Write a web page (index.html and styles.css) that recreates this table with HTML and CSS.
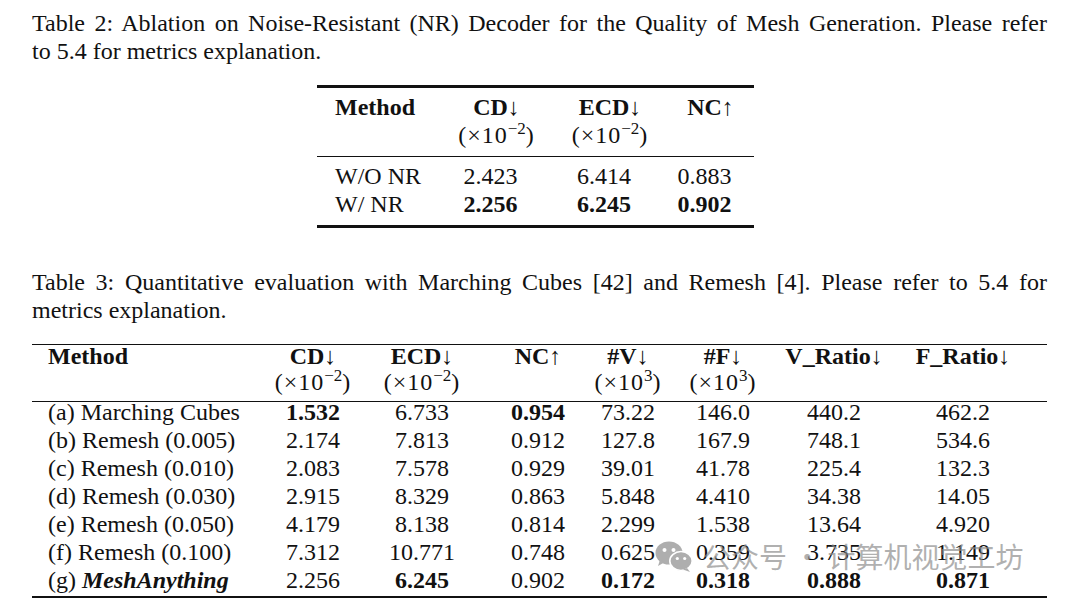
FILE: index.html
```html
<!DOCTYPE html>
<html lang="en">
<head>
<meta charset="utf-8">
<title>Tables 2 and 3</title>
<link rel="stylesheet" href="styles.css">
</head>
<body>
<main class="page">
  <p class="caption">
    <span class="cap-line cap-justify">Table 2: Ablation on Noise-Resistant (NR) Decoder for the Quality of Mesh Generation. Please refer</span>
    <span class="cap-line">to 5.4 for metrics explanation.</span>
  </p>

  <section class="tbl tbl-nr">
    <div class="thead grid-nr">
      <div class="th method">Method</div>
      <div class="th"><div class="main">CD<span class="arr">↓</span></div><div class="sub">(×10<span class="sup">−2</span>)</div></div>
      <div class="th"><div class="main">ECD<span class="arr">↓</span></div><div class="sub">(×10<span class="sup">−2</span>)</div></div>
      <div class="th"><div class="main">NC<span class="arr">↑</span></div></div>
    </div>
    <div class="tbody grid-nr">
      <div class="td method">W/O NR</div><div class="td num">2.423</div><div class="td num">6.414</div><div class="td num">0.883</div>
      <div class="td method">W/ NR</div><div class="td num"><b>2.256</b></div><div class="td num"><b>6.245</b></div><div class="td num"><b>0.902</b></div>
    </div>
  </section>

  <p class="caption c3">
    <span class="cap-line cap-justify">Table 3: Quantitative evaluation with Marching Cubes [42] and Remesh [4]. Please refer to 5.4 for</span>
    <span class="cap-line">metrics explanation.</span>
  </p>

  <section class="tbl tbl-mc">
    <div class="thead grid-mc">
      <div class="th method">Method</div>
      <div class="th"><div class="main">CD<span class="arr">↓</span></div><div class="sub">(×10<span class="sup">−2</span>)</div></div>
      <div class="th"><div class="main">ECD<span class="arr">↓</span></div><div class="sub">(×10<span class="sup">−2</span>)</div></div>
      <div class="th"><div class="main">NC<span class="arr">↑</span></div></div>
      <div class="th"><div class="main">#V<span class="arr">↓</span></div><div class="sub">(×10<span class="sup">3</span>)</div></div>
      <div class="th"><div class="main">#F<span class="arr">↓</span></div><div class="sub">(×10<span class="sup">3</span>)</div></div>
      <div class="th"><div class="main">V_Ratio<span class="arr">↓</span></div></div>
      <div class="th"><div class="main">F_Ratio<span class="arr">↓</span></div></div>
    </div>
    <div class="tbody grid-mc">
      <div class="td method">(a) Marching Cubes</div><div class="td"><b>1.532</b></div><div class="td">6.733</div><div class="td"><b>0.954</b></div><div class="td">73.22</div><div class="td">146.0</div><div class="td">440.2</div><div class="td">462.2</div>
      <div class="td method">(b) Remesh (0.005)</div><div class="td">2.174</div><div class="td">7.813</div><div class="td">0.912</div><div class="td">127.8</div><div class="td">167.9</div><div class="td">748.1</div><div class="td">534.6</div>
      <div class="td method">(c) Remesh (0.010)</div><div class="td">2.083</div><div class="td">7.578</div><div class="td">0.929</div><div class="td">39.01</div><div class="td">41.78</div><div class="td">225.4</div><div class="td">132.3</div>
      <div class="td method">(d) Remesh (0.030)</div><div class="td">2.915</div><div class="td">8.329</div><div class="td">0.863</div><div class="td">5.848</div><div class="td">4.410</div><div class="td">34.38</div><div class="td">14.05</div>
      <div class="td method">(e) Remesh (0.050)</div><div class="td">4.179</div><div class="td">8.138</div><div class="td">0.814</div><div class="td">2.299</div><div class="td">1.538</div><div class="td">13.64</div><div class="td">4.920</div>
      <div class="td method">(f) Remesh (0.100)</div><div class="td">7.312</div><div class="td">10.771</div><div class="td">0.748</div><div class="td">0.625</div><div class="td">0.359</div><div class="td">3.735</div><div class="td">1.149</div>
      <div class="td method">(g) <b><i>MeshAnything</i></b></div><div class="td">2.256</div><div class="td"><b>6.245</b></div><div class="td">0.902</div><div class="td"><b>0.172</b></div><div class="td"><b>0.318</b></div><div class="td"><b>0.888</b></div><div class="td"><b>0.871</b></div>
    </div>
  </section>

  <div class="watermark">
    <svg class="wm-icon" width="38" height="31" viewBox="0 0 38 31" aria-hidden="true">
      <ellipse cx="14" cy="12" rx="13.5" ry="11.5" fill="#9a9a9a"/>
      <path d="M5 19 L3 25 L10 21 Z" fill="#9a9a9a"/>
      <circle cx="9.5" cy="9" r="2" fill="#fff"/>
      <circle cx="18.5" cy="9" r="2" fill="#fff"/>
      <ellipse cx="26" cy="20" rx="11.2" ry="9.5" fill="#9a9a9a" stroke="#fff" stroke-width="1.6"/>
      <path d="M32 27 L35 31 L28 28.5 Z" fill="#9a9a9a"/>
      <circle cx="22.3" cy="17.5" r="1.6" fill="#fff"/>
      <circle cx="29.7" cy="17.5" r="1.6" fill="#fff"/>
    </svg>
    <span class="wm-text">公众号 · 计算机视觉工坊</span>
  </div>
</main>
</body>
</html>
```

FILE: styles.css
```css
html, body {
  margin: 0;
  background: #ffffff;
}

body {
  color: #111111;
  font-family: "Liberation Serif", "Times New Roman", serif;
  font-size: 24px;
}

.page {
  position: relative;
  width: 1015px;
  padding: 9px 24px 0 32px;
}

.caption {
  margin: 0;
  line-height: 28px;
}

.caption.c3 {
  margin-top: 40px;
}

.cap-line {
  display: block;
}

.cap-justify {
  text-align: justify;
  text-align-last: justify;
}

/* shared table pieces */
.tbl {
  border-color: #111111;
}

.th {
  justify-self: center;
  text-align: center;
  font-weight: bold;
  white-space: nowrap;
}

.th .sub {
  font-weight: normal;
  letter-spacing: 1px;
}

.arr {
  font-weight: normal;
}

.sup {
  font-size: 17px;
  line-height: 0;
  vertical-align: 9px;
  letter-spacing: 0;
}

.td {
  justify-self: center;
  white-space: nowrap;
}

.method {
  justify-self: start;
}

/* Table 2 */
.tbl-nr {
  width: 437px;
  margin: 20px 0 0 285px;
  border-top: 3px solid #111111;
  border-bottom: 3px solid #111111;
}

.grid-nr {
  display: grid;
  grid-template-columns: 123px 113px 114px 87px;
}

.tbl-nr .thead {
  padding: 5px 0 7px;
  border-bottom: 1px solid #111111;
  line-height: 28px;
}

.tbl-nr .tbody {
  padding: 5px 0 7px;
  line-height: 28px;
}

.tbl-nr .method {
  padding-left: 18px;
}

.tbl-nr .num {
  padding-right: 12px;
}

/* Table 3 */
.tbl-mc {
  margin-top: 20px;
  border-top: 1px solid #111111;
  border-bottom: 2px solid #111111;
}

.grid-mc {
  display: grid;
  grid-template-columns: 229px 104px 114px 118px 62px 128px 94px 164px;
}

.tbl-mc .thead {
  padding-bottom: 4px;
  border-bottom: 1px solid #111111;
}

.tbl-mc .th {
  line-height: 22px;
}

.tbl-mc .th .sub {
  line-height: 30px;
}

.tbl-mc .tbody {
  margin-top: -4px;
  padding-bottom: 2px;
  line-height: 28px;
}

.tbl-mc .method {
  padding-left: 16px;
}

/* watermark overlay */
.watermark {
  position: absolute;
  left: 655px;
  top: 540px;
  height: 32px;
  display: flex;
  align-items: center;
  gap: 10px;
  opacity: 0.8;
}

.wm-text {
  font-family: "Noto Sans CJK SC", "Noto Sans", sans-serif;
  font-size: 28px;
  line-height: 32px;
  color: rgba(140, 140, 140, 0.85);
  white-space: nowrap;
}
```
